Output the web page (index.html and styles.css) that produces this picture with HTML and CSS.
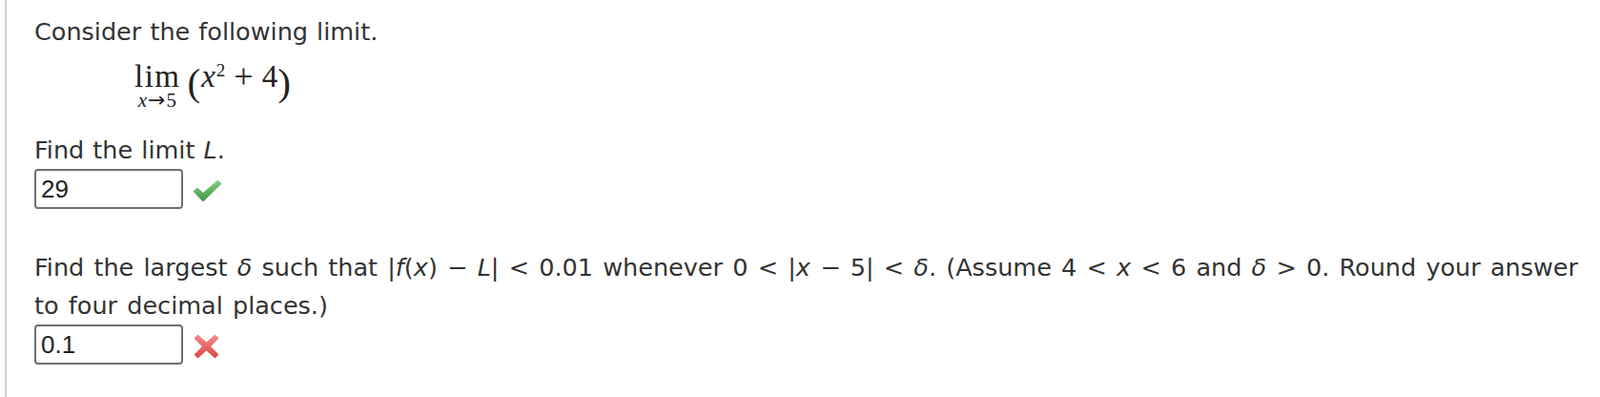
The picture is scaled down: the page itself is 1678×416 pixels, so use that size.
FILE: index.html
```html
<!DOCTYPE html>
<html lang="en">
<head>
<meta charset="utf-8">
<title>Limit question</title>
<link rel="stylesheet" href="styles.css">
</head>
<body>
<div class="page">
  <p class="text first">Consider the following limit.</p>
  <div class="math">
    <span class="lim"><span class="limop">lim</span><span class="limsub"><i>x</i><span class="arrow">→</span>5</span></span>
    <span class="expr"><span class="paren">(</span><i class="mx">x</i><span class="sup">2</span><span class="plus">+</span><span class="four">4</span><span class="paren">)</span></span>
  </div>
  <p class="text">Find the limit <i>L</i>.</p>
  <div class="answer">
    <input class="box" type="text" value="29" readonly>
    <svg class="check" width="31" height="24" viewBox="0 0 31 24" aria-label="correct">
      <defs>
        <linearGradient id="g" x1="0" y1="0" x2="0" y2="1">
          <stop offset="0" stop-color="#86cf86"/>
          <stop offset="1" stop-color="#3f963f"/>
        </linearGradient>
      </defs>
      <path d="M0.5 12.5 L5 8.5 L11 14 L26.5 0.5 L30.5 4.5 L11 23.5 Z" fill="url(#g)"/>
    </svg>
  </div>
  <p class="text second">Find the largest <i>δ</i> such that |<i>f</i>(<i>x</i>) − <i>L</i>| &lt; 0.01 whenever 0 &lt; |<i>x</i> − 5| &lt; <i>δ</i>. (Assume 4 &lt; <i>x</i> &lt; 6 and <i>δ</i> &gt; 0. Round your answer to four decimal places.)</p>
  <div class="answer">
    <input class="box" type="text" value="0.1" readonly>
    <svg class="cross" width="27" height="26" viewBox="0 0 27 26" aria-label="incorrect">
      <defs>
        <linearGradient id="r" x1="0" y1="0" x2="0" y2="1">
          <stop offset="0" stop-color="#f28b8b"/>
          <stop offset="1" stop-color="#d94848"/>
        </linearGradient>
      </defs>
      <path d="M4.5 0.5 L13.5 8.5 L22.5 0.5 L26.5 4.5 L18 13 L26.5 21.5 L22.5 25.5 L13.5 17.5 L4.5 25.5 L0.5 21.5 L9 13 L0.5 4.5 Z" fill="url(#r)"/>
    </svg>
  </div>
</div>
</body>
</html>
```

FILE: styles.css
```css
html, body {
  margin: 0;
  padding: 0;
  background: #ffffff;
}

.page {
  margin-left: 5px;
  border-left: 2px solid #d2d2d2;
  padding: 13px 4px 0 29px;
  min-height: 403px;
  font-family: "DejaVu Sans", Verdana, sans-serif;
  font-size: 25.5px;
  line-height: 40px;
  color: #333333;
  word-spacing: 1px;
}

.text {
  margin: 0;
}

.text i {
  font-style: oblique;
}

.second {
  margin-top: 41px;
  word-spacing: 2.1px;
}

.math {
  display: flex;
  align-items: flex-start;
  height: 84px;
  padding-left: 105px;
  font-family: "Liberation Serif", "DejaVu Serif", serif;
  color: #222222;
  word-spacing: 0;
}

.lim {
  display: flex;
  flex-direction: column;
  align-items: center;
  margin-top: 11px;
}

.limop {
  font-size: 33px;
  line-height: 33px;
  letter-spacing: 1.5px;
}

.limsub {
  font-size: 21px;
  line-height: 21px;
  margin-top: -3px;
  letter-spacing: 1px;
}

.limsub i {
  font-style: italic;
}

.arrow {
  font-family: "DejaVu Sans", sans-serif;
  font-size: 22px;
}

.expr {
  margin-top: 11px;
  margin-left: 7px;
  font-size: 33px;
  line-height: 33px;
  white-space: nowrap;
}

.paren {
  font-size: 41px;
  line-height: 0;
  vertical-align: -9px;
}

.mx {
  font-style: italic;
  margin-left: 1px;
}

.sup {
  font-size: 19px;
  line-height: 0;
  vertical-align: 11px;
  margin-left: 1px;
}

.plus {
  margin-left: 9px;
  font-size: 36px;
  vertical-align: -1px;
  line-height: 0;
}

.four {
  margin-left: 9px;
}

.answer {
  display: flex;
  align-items: center;
  height: 42px;
}

.box {
  box-sizing: border-box;
  width: 156px;
  height: 42px;
  margin: 0;
  padding: 0 0 0 5px;
  border: 2px solid #707070;
  border-radius: 4px;
  background: #ffffff;
  font-family: "Liberation Sans", Arial, sans-serif;
  font-size: 26px;
  color: #222222;
  outline: none;
}

.check {
  margin-left: 10px;
  margin-top: 4px;
}

.cross {
  margin-left: 11px;
  margin-top: 4px;
}
```
